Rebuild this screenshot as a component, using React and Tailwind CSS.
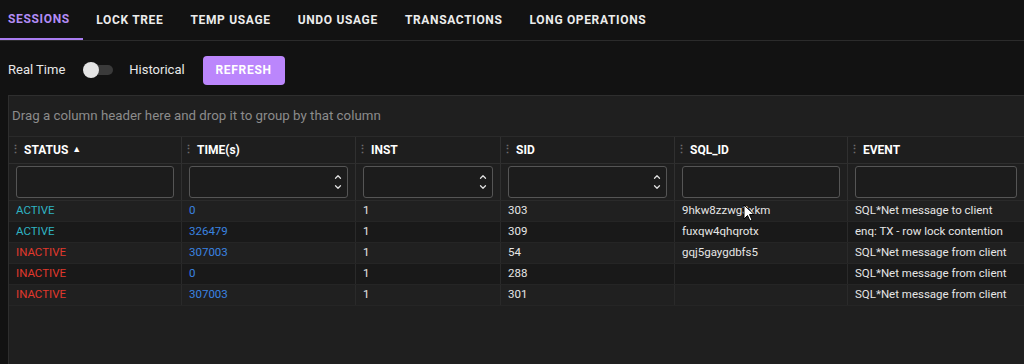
import { ChevronUp, ChevronDown } from 'lucide-react'

const tabs = ['SESSIONS', 'LOCK TREE', 'TEMP USAGE', 'UNDO USAGE', 'TRANSACTIONS', 'LONG OPERATIONS']

const columns = [
  { label: 'STATUS', w: 'w-[173px]', sort: true },
  { label: 'TIME(s)', w: 'w-[174px]', num: true },
  { label: 'INST', w: 'w-[145px]', num: true },
  { label: 'SID', w: 'w-[174px]', num: true },
  { label: 'SQL_ID', w: 'w-[173px]' },
  { label: 'EVENT', w: 'w-[177px]' },
]

const rows = [
  { status: 'ACTIVE', time: '0', inst: '1', sid: '303', sql: '9hkw8zzwg3xkm', event: 'SQL*Net message to client' },
  { status: 'ACTIVE', time: '326479', inst: '1', sid: '309', sql: 'fuxqw4qhqrotx', event: 'enq: TX - row lock contention' },
  { status: 'INACTIVE', time: '307003', inst: '1', sid: '54', sql: 'gqj5gaygdbfs5', event: 'SQL*Net message from client' },
  { status: 'INACTIVE', time: '0', inst: '1', sid: '288', sql: '', event: 'SQL*Net message from client' },
  { status: 'INACTIVE', time: '307003', inst: '1', sid: '301', sql: '', event: 'SQL*Net message from client' },
]

function Handle() {
  return <span className="text-[#6b6b6b] text-[11px] leading-none mr-[3px] -mt-[1px]">⋮</span>
}

export default function App() {
  return (
    <div className="w-[1024px] h-[364px] overflow-hidden bg-[#121212] text-[#e6e6e6]" style={{ fontFamily: 'Roboto, "Liberation Sans", sans-serif' }}>
      {/* Tabs */}
      <div className="flex h-[41px] border-b border-[#2b2b2b]">
        {tabs.map((t, i) => (
          <div
            key={t}
            className={`flex items-center h-[40px] text-[12px] font-bold tracking-[0.055em] ${i === 0 ? 'pl-2 pr-[13px] text-[#b38cf5] border-b-2 border-[#a97cf0]' : 'px-[13.5px] text-[#ececec]'}`}
          >
            {t}
          </div>
        ))}
      </div>

      {/* Controls */}
      <div className="flex items-center h-[54px] pt-[4px] pl-2 text-[13px]">
        <span className="text-[#e8e8e8]">Real Time</span>
        <div className="relative w-[30px] h-[16px] ml-[18px] mr-[16px] flex items-center">
          <div className="absolute left-[5px] right-0 h-[10px] rounded-full bg-[#3a3a3a]" />
          <div className="absolute left-0 w-[16px] h-[16px] rounded-full bg-[#e4e4e4]" />
        </div>
        <span className="text-[#e8e8e8]">Historical</span>
        <button className="ml-[18px] w-[82px] h-[29px] rounded bg-[#bb86fc] text-white text-[12px] font-bold tracking-[0.06em]">
          REFRESH
        </button>
      </div>

      {/* Grid */}
      <div className="relative ml-2 h-[269px] bg-[#1f1f1f] border-l border-t border-[#2e2e2e]">
        <div className="h-[41px] flex items-center pl-[3px] text-[13.3px] text-[#8c8c8c] border-b border-[#2a2a2a]">
          Drag a column header here and drop it to group by that column
        </div>

        {/* Header */}
        <div className="flex h-[27px] border-b border-[#2e2e2e] bg-[#1e1e1e]">
          {columns.map((c) => (
            <div key={c.label} className={`${c.w} shrink-0 flex items-center pl-[1px] border-r border-[#303030] text-[12px] font-bold text-white`}>
              <Handle />
              {c.label}
              {c.sort && <span className="ml-[4px] text-[9px]">▲</span>}
            </div>
          ))}
        </div>

        {/* Filter row */}
        <div className="flex h-[37px] border-b border-[#2a2a2a]">
          {columns.map((c) => (
            <div key={c.label} className={`${c.w} shrink-0 flex items-center px-[7px] border-r border-[#303030]`}>
              <div className="w-full h-[32px] rounded-[3px] border border-[#555555] bg-[#1c1c1c] flex flex-col items-end justify-center pr-[4px]">
                {c.num && (
                  <>
                    <ChevronUp size={10} strokeWidth={3} className="text-[#e0e0e0]" />
                    <ChevronDown size={10} strokeWidth={3} className="text-[#e0e0e0]" />
                  </>
                )}
              </div>
            </div>
          ))}
        </div>

        {/* Rows */}
        {rows.map((r, i) => (
          <div key={i} className={`flex h-[21px] border-b border-[#252525] text-[11.5px] ${i % 2 ? 'bg-[#191919]' : 'bg-[#202020]'}`}>
            <div className={`w-[173px] shrink-0 pl-[7px] flex items-center border-r border-[#2a2a2a] ${r.status === 'ACTIVE' ? 'text-[#2fb3c2]' : 'text-[#e0382c]'}`}>{r.status}</div>
            <div className="w-[174px] shrink-0 pl-[7px] flex items-center border-r border-[#2a2a2a] text-[#3a83e0]">{r.time}</div>
            <div className="w-[145px] shrink-0 pl-[7px] flex items-center border-r border-[#2a2a2a]">{r.inst}</div>
            <div className="w-[174px] shrink-0 pl-[7px] flex items-center border-r border-[#2a2a2a]">{r.sid}</div>
            <div className="w-[173px] shrink-0 pl-[7px] flex items-center border-r border-[#2a2a2a]">{r.sql}</div>
            <div className="w-[177px] shrink-0 pl-[7px] flex items-center border-r border-[#2a2a2a] whitespace-nowrap">{r.event}</div>
          </div>
        ))}

        {/* mouse cursor */}
        <svg className="absolute left-[734px] top-[108px]" width="12" height="18" viewBox="0 0 12 18">
          <path d="M1 1 L1 15 L4.5 11.5 L7 17 L9 16 L6.5 10.5 L11 10.5 Z" fill="#ffffff" stroke="#000000" strokeWidth="1" />
        </svg>
      </div>
    </div>
  )
}
